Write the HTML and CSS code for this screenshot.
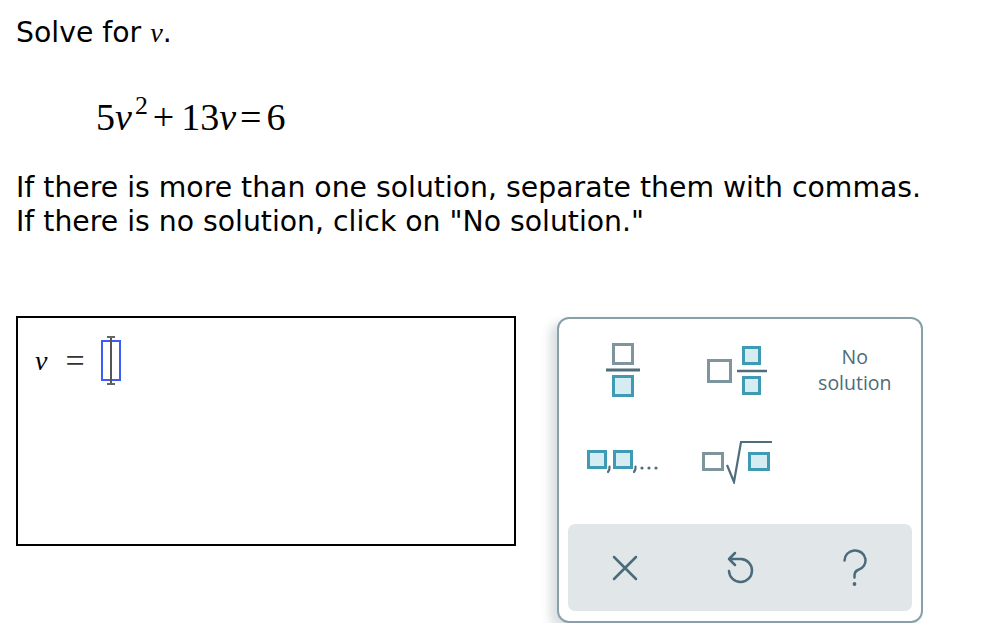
FILE: index.html
```html
<!DOCTYPE html>
<html lang="en">
<head>
    <meta charset="UTF-8">
    <title>Solve for v</title>
    <link rel="stylesheet" href="styles.css">
</head>
<body>
    <div class="page">
        <div class="prompt">Solve for <span class="var">v</span>.</div>

        <div class="equation">5<span class="var">v</span><sup>2</sup><span class="op">+</span>13<span class="var">v</span><span class="eq">=</span>6</div>

        <div class="hint">
            If there is more than one solution, separate them with commas.<br>
            If there is no solution, click on "No solution."
        </div>

        <div class="work">
            <!-- answer box -->
            <div class="answer">
                <span class="var">v</span>
                <span class="equals">=</span>
                <span class="slot"></span>
            </div>

            <!-- keypad -->
            <div class="pad">
                <div class="keys">
                    <div class="key">
                        <svg width="34" height="54" viewBox="0 0 34 54">
                            <rect x="7.5" y="1.5" width="19" height="19" fill="#fff" stroke="#7f959e" stroke-width="3"/>
                            <line x1="0" y1="27" x2="34" y2="27" stroke="#4f6d7a" stroke-width="3"/>
                            <rect x="7.5" y="33.5" width="19" height="19" fill="#d5ecf2" stroke="#3f9bb4" stroke-width="3"/>
                        </svg>
                    </div>
                    <div class="key">
                        <svg width="62" height="51" viewBox="0 0 62 51">
                            <rect x="2.5" y="15.5" width="22" height="21" fill="#fff" stroke="#7f959e" stroke-width="3"/>
                            <line x1="31" y1="26" x2="61" y2="26" stroke="#4f6d7a" stroke-width="2.5"/>
                            <rect x="37.5" y="2.5" width="16" height="16" fill="#d5ecf2" stroke="#3f9bb4" stroke-width="3"/>
                            <rect x="37.5" y="32.5" width="16" height="16" fill="#d5ecf2" stroke="#3f9bb4" stroke-width="3"/>
                        </svg>
                    </div>
                    <div class="key key-text">No<br>solution</div>

                    <div class="key">
                        <svg width="72" height="24" viewBox="0 0 72 24">
                            <rect x="1.5" y="1.5" width="17" height="16" fill="#d5ecf2" stroke="#3f9bb4" stroke-width="3"/>
                            <rect x="27.5" y="1.5" width="17" height="16" fill="#d5ecf2" stroke="#3f9bb4" stroke-width="3"/>
                            <path d="M22.5 16.5 q0.5 3 -1.5 5.5" fill="none" stroke="#4f6d7a" stroke-width="2.2" stroke-linecap="round"/>
                            <path d="M48.5 16.5 q0.5 3 -1.5 5.5" fill="none" stroke="#4f6d7a" stroke-width="2.2" stroke-linecap="round"/>
                            <circle cx="55" cy="18" r="1.6" fill="#4f6d7a"/>
                            <circle cx="62" cy="18" r="1.6" fill="#4f6d7a"/>
                            <circle cx="69" cy="18" r="1.6" fill="#4f6d7a"/>
                        </svg>
                    </div>
                    <div class="key">
                        <svg width="72" height="44" viewBox="0 0 72 44">
                            <rect x="2.5" y="13.5" width="19" height="16" fill="#fff" stroke="#7f959e" stroke-width="3"/>
                            <path d="M26 25 L33 42 L40 2 L71 2" fill="none" stroke="#4f6d7a" stroke-width="2.2"/>
                            <rect x="48.5" y="13.5" width="19" height="16" fill="#d5ecf2" stroke="#3f9bb4" stroke-width="3"/>
                        </svg>
                    </div>
                    <div class="key"></div>
                </div>

                <div class="tools">
                    <div class="tool">
                        <svg width="26" height="26" viewBox="0 0 26 26">
                            <path d="M2 2 L24 24 M24 2 L2 24" stroke="#4a6b79" stroke-width="2.5" stroke-linecap="round"/>
                        </svg>
                    </div>
                    <div class="tool">
                        <svg width="28" height="34" viewBox="0 0 28 34">
                            <path d="M3 20 A 11.5 11.5 0 1 0 15 8 L3 8 M9 2 L3 8 L9 14" fill="none" stroke="#4a6b79" stroke-width="2.5" stroke-linecap="round" stroke-linejoin="round"/>
                        </svg>
                    </div>
                    <div class="tool">
                        <svg width="26" height="38" viewBox="0 0 26 38">
                            <path d="M2.5 11.5 A 10.5 10 0 1 1 16 21 Q 12.5 22.5 12.5 26.5 V 28.5" fill="none" stroke="#4a6b79" stroke-width="2.5" stroke-linecap="round"/>
                            <circle cx="12.5" cy="35" r="1.9" fill="#4a6b79"/>
                        </svg>
                    </div>
                </div>
            </div>
        </div>
    </div>
</body>
</html>
```

FILE: styles.css
```css
body {
    margin: 0;
    background-color: #fff;
    color: #000;
    font-family: "DejaVu Sans", Verdana, sans-serif;
}
.page {
    padding: 16px 0 0 16px;
}
.var {
    font-family: "Liberation Serif", "Times New Roman", serif;
    font-style: italic;
}
.prompt {
    font-size: 28.3px;
    line-height: 34px;
}
.equation {
    font-family: "Liberation Serif", "Times New Roman", serif;
    font-size: 38px;
    line-height: 40px;
    margin: 47px 0 0 80px;
}
.equation sup {
    font-size: 0.68em;
    line-height: 0;
    vertical-align: 0.62em;
    margin-left: 3px;
}
.equation .op {
    margin: 0 7px 0 5px;
}
.equation .eq {
    margin: 0 5px 0 4px;
}
.hint {
    font-size: 28.3px;
    line-height: 34px;
    margin-top: 34px;
}
.work {
    display: flex;
    align-items: flex-start;
    gap: 41px;
    margin-top: 77px;
}
.answer {
    box-sizing: border-box;
    width: 500px;
    height: 230px;
    border: 2px solid #000;
    display: flex;
    align-items: flex-start;
    padding: 21px 0 0 17px;
}
.answer .var {
    font-size: 28px;
    line-height: 44px;
}
.equals {
    font-family: "Liberation Serif", "Times New Roman", serif;
    font-size: 34px;
    line-height: 44px;
    color: #333;
    margin: 0 16px 0 18px;
}
.slot {
    position: relative;
    box-sizing: border-box;
    width: 20px;
    height: 41px;
    margin-top: 1px;
    border: 2px solid #3d5cf5;
}
.slot::before {
    content: "";
    position: absolute;
    left: 7px;
    top: -6px;
    width: 2px;
    height: 49px;
    background-color: #555;
}
.slot::after {
    content: "";
    position: absolute;
    left: 4px;
    top: -6px;
    width: 8px;
    height: 45px;
    border-top: 2px solid #666;
    border-bottom: 2px solid #666;
}
.pad {
    box-sizing: border-box;
    width: 366px;
    margin-top: 1px;
    border: 2px solid #8aa0a9;
    border-radius: 12px;
    padding: 5px 0 10px 0;
    background-color: #fff;
    box-shadow: -7px 5px 10px rgba(70, 95, 105, 0.2);
}
.keys {
    display: grid;
    grid-template-columns: repeat(3, 1fr);
    grid-auto-rows: 92px;
    padding: 0 12px 0 7px;
}
.key {
    display: flex;
    align-items: center;
    justify-content: center;
}
.key-text {
    font-family: "Open Sans", Lato, sans-serif;
    font-size: 19.5px;
    line-height: 26px;
    color: #4d6b78;
    text-align: center;
    padding: 0 0 0 6px;
}
.tools {
    display: grid;
    grid-template-columns: repeat(3, 1fr);
    height: 87px;
    margin: 16px 9px 0 9px;
    background-color: #e1e6e9;
    border-radius: 7px;
}
.tool {
    display: flex;
    align-items: center;
    justify-content: center;
}
```
